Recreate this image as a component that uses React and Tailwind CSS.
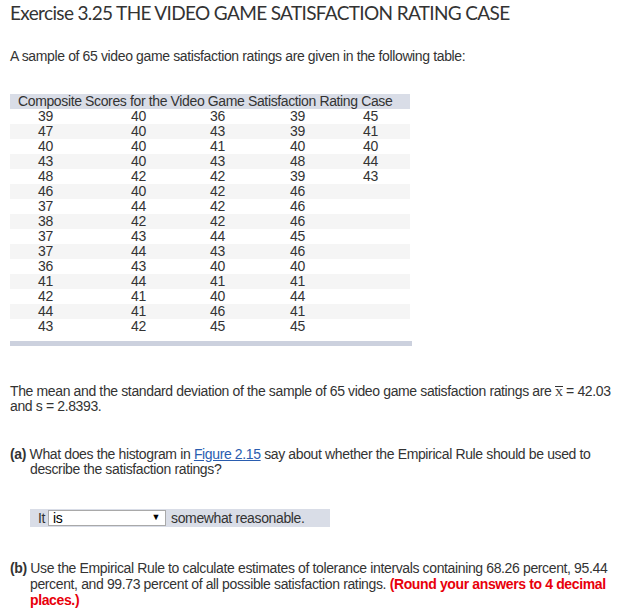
import React from 'react';

const rows = [
  [39, 40, 36, 39, 45],
  [47, 40, 43, 39, 41],
  [40, 40, 41, 40, 40],
  [43, 40, 43, 48, 44],
  [48, 42, 42, 39, 43],
  [46, 40, 42, 46],
  [37, 44, 42, 46],
  [38, 42, 42, 46],
  [37, 43, 44, 45],
  [37, 44, 43, 46],
  [36, 43, 40, 40],
  [41, 44, 41, 41],
  [42, 41, 40, 44],
  [44, 41, 46, 41],
  [43, 42, 45, 45],
];

const body = { fontFamily: '"Liberation Sans", Arial, sans-serif' };

export default function App() {
  return (
    <div className="w-[637px] h-[612px] bg-white text-[#333] overflow-hidden px-[10px] tracking-[-0.37px]" style={body}>
      <h1 className="pt-[2px] text-[19px] leading-[22px] text-[#333] tracking-[-0.65px]" style={{ fontFamily: 'Lato, "Open Sans", sans-serif' }}>
        Exercise 3.25 THE VIDEO GAME SATISFACTION RATING CASE
      </h1>

      <p className="mt-[24px] text-[14px] leading-[16px]">
        A sample of 65 video game satisfaction ratings are given in the following table:
      </p>

      {/* data table */}
      <div className="mt-[30px] w-[400px] text-[14px]">
        <div className="h-[15px] leading-[15px] bg-[#d9dde7] pl-[8px] whitespace-nowrap">
          Composite Scores for the Video Game Satisfaction Rating Case
        </div>
        {rows.map((r, i) => (
          <div
            key={i}
            className={`h-[15px] leading-[15px] pl-[28px] grid grid-cols-[93px_79px_80px_73px_1fr] ${i % 2 ? 'bg-[#f5f5f5]' : 'bg-white'}`}
          >
            {r.map((v, j) => (
              <span key={j}>{v}</span>
            ))}
          </div>
        ))}
        <div className="mt-[7px] h-[5px] w-[402px] bg-[#ccd1de]" />
      </div>

      <p className="mt-[38px] text-[14px] leading-[15px]">
        The mean and the standard deviation of the sample of 65 video game satisfaction ratings are{' '}
        <span className="inline-block border-t border-[#333] leading-[11px] text-[11px]" style={{ fontFamily: '"Liberation Serif", serif' }}>X</span>{' '}
        = 42.03 and s = 2.8393.
      </p>

      <div className="mt-[33px] text-[14px] leading-[15px] pl-[20px] -indent-[20px]">
        <b>(a)</b> What does the histogram in{' '}
        <a className="text-[#2a5db0] underline">Figure 2.15</a> say about whether the Empirical Rule should be used to
        describe the satisfaction ratings?
      </div>

      <div className="mt-[32px] ml-[20px] w-[300px] h-[18px] bg-[#d9dde7] flex items-center text-[14px]">
        <span className="pl-[8px] pr-[3px]">It</span>
        <div className="w-[118px] h-[16px] bg-white border border-[#a9a9a9] flex items-center justify-between pl-[4px] pr-[5px]">
          <span className="text-[#000]">is</span>
          <span className="text-[9px] text-black">▼</span>
        </div>
        <span className="pl-[5px]">somewhat reasonable.</span>
      </div>

      <div className="mt-[33px] text-[14px] leading-[16px] pl-[20px] -indent-[20px]">
        <b>(b)</b> Use the Empirical Rule to calculate estimates of tolerance intervals containing 68.26 percent, 95.44
        percent, and 99.73 percent of all possible satisfaction ratings.{' '}
        <b className="text-[#e8000b]">(Round your answers to 4 decimal places.)</b>
      </div>
    </div>
  );
}
